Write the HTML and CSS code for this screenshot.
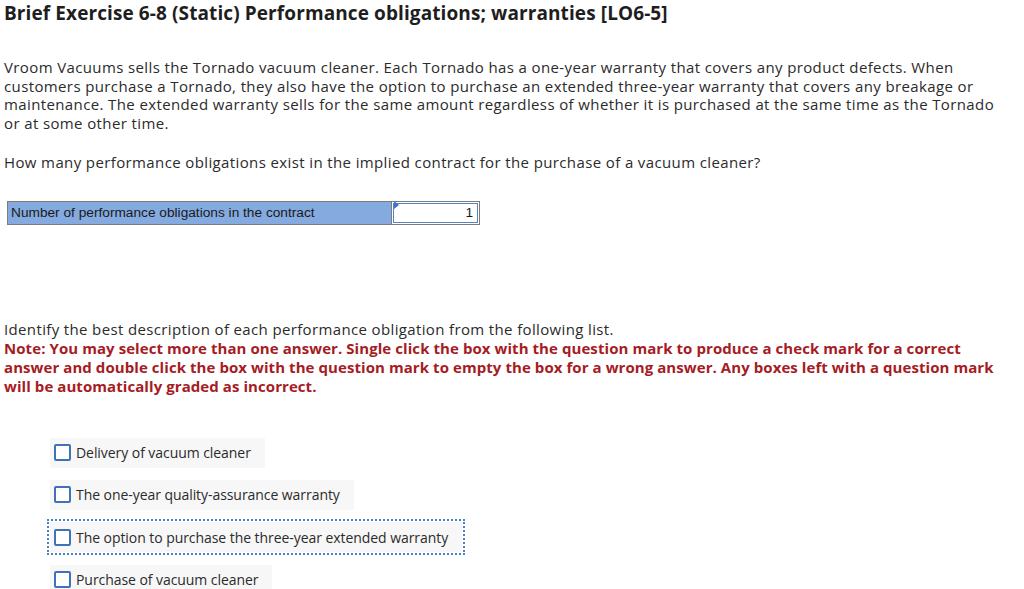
FILE: index.html
```html
<!DOCTYPE html>
<html>
<head>
<meta charset="utf-8">
<link rel="stylesheet" href="styles.css">
</head>
<body>
<div class="page">
  <h1 class="title">Brief Exercise 6-8 (Static) Performance obligations; warranties [LO6-5]</h1>
  <p class="para">Vroom Vacuums sells the Tornado vacuum cleaner. Each Tornado has a one-year warranty that covers any product defects. When customers purchase a Tornado, they also have the option to purchase an extended three-year warranty that covers any breakage or maintenance. The extended warranty sells for the same amount regardless of whether it is purchased at the same time as the Tornado or at some other time.</p>
  <p class="question">How many performance obligations exist in the implied contract for the purchase of a vacuum cleaner?</p>
  <div class="grid-row">
    <div class="label-cell">Number of performance obligations in the contract</div>
    <div class="input-cell"><span class="marker"></span>1</div>
  </div>
  <p class="identify">Identify the best description of each performance obligation from the following list.<br>
  <span class="note">Note: You may select more than one answer. Single click the box with the question mark to produce a check mark for a correct answer and double click the box with the question mark to empty the box for a wrong answer. Any boxes left with a question mark will be automatically graded as incorrect.</span></p>
  <div class="options">
    <div class="option"><span class="box"></span>Delivery of vacuum cleaner</div>
    <div class="option"><span class="box"></span>The one-year quality-assurance warranty</div>
    <div class="option focused"><span class="box"></span>The option to purchase the three-year extended warranty</div>
    <div class="option"><span class="box"></span>Purchase of vacuum cleaner</div>
  </div>
</div>
</body>
</html>
```
FILE: styles.css
```css
html, body {
  margin: 0;
  padding: 0;
  background: #fff;
  overflow: hidden;
}
.page {
  width: 996px;
  padding: 0 0 0 4px;
  font-family: "Open Sans", "Lato", sans-serif;
  color: #2b2b2b;
}
.title {
  margin: 0;
  padding-top: 1px;
  font-size: 19px;
  font-weight: 700;
  line-height: 24px;
  letter-spacing: 0.1px;
  color: #1e1e1e;
}
.para {
  margin: 33px 0 0 0;
  font-size: 15px;
  line-height: 18.7px;
  letter-spacing: 0.38px;
}
.question {
  margin: 20px 0 0 0;
  font-size: 15px;
  line-height: 19px;
  letter-spacing: 0.38px;
}
.grid-row {
  display: flex;
  margin: 29px 0 0 3px;
  width: 473px;
  height: 24px;
  border: 1px solid #7c7c7c;
  box-sizing: border-box;
  font-family: "Liberation Sans", Arial, sans-serif;
  font-size: 13.7px;
  color: #1a1a1a;
}
.label-cell {
  width: 384px;
  background: #84aadf;
  border-right: 1px solid #7c7c7c;
  padding-left: 3px;
  line-height: 22px;
  box-sizing: border-box;
}
.input-cell {
  position: relative;
  flex: 1;
  text-align: right;
  padding-right: 4px;
  border: 1px solid #5a82c2;
  margin: 1px;
  line-height: 18px;
}
.marker {
  position: absolute;
  left: 0;
  top: -3px;
  width: 0;
  height: 0;
  border-top: 4px solid transparent;
  border-bottom: 4px solid transparent;
  border-left: 5px solid #3f73c5;
}
.identify {
  margin: 95px 0 0 0;
  font-size: 15px;
  line-height: 19.2px;
  letter-spacing: 0.36px;
}
.note {
  color: #a51c24;
  font-weight: 700;
  letter-spacing: 0.07px;
}
.options {
  display: flex;
  flex-direction: column;
  align-items: flex-start;
  gap: 12.3px;
  margin: 41px 0 0 46px;
}
.option {
  display: flex;
  align-items: center;
  height: 30px;
  padding: 0 14px 0 4px;
  background: #f7f7f7;
  font-size: 14px;
  letter-spacing: -0.06px;
  color: #2b2b2b;
}
.option.focused {
  outline: 2px dotted #4b7fcb;
  outline-offset: 1px;
}
.box {
  width: 13px;
  height: 13px;
  border: 2px solid #3e72bd;
  border-radius: 2px;
  margin-right: 5px;
  background: #fff;
}
```
